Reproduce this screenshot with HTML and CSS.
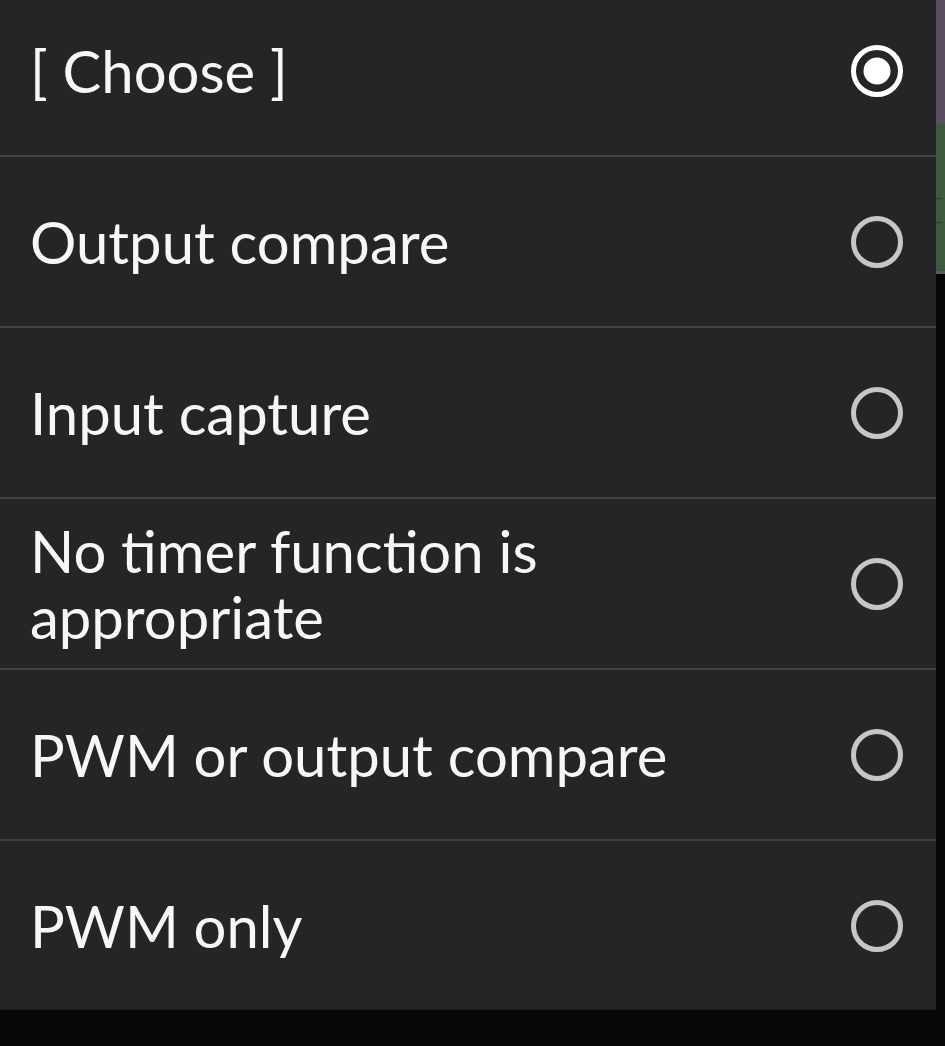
FILE: index.html
```html
<!DOCTYPE html>
<html>
<head>
<meta charset="utf-8">
<link rel="stylesheet" href="styles.css">
</head>
<body>
<div class="screen">
  <div class="panel">
    <ul class="list">
      <li class="item selected">
        <span class="label">[ Choose ]</span>
        <svg class="radio" viewBox="0 0 52 52" width="52" height="52"><circle cx="26" cy="26" r="23.5" fill="none" stroke="currentColor" stroke-width="5"/><circle cx="26" cy="26" r="13.5" fill="currentColor"/></svg>
      </li>
      <li class="item">
        <span class="label">Output compare</span>
        <svg class="radio" viewBox="0 0 52 52" width="52" height="52"><circle cx="26" cy="26" r="23.5" fill="none" stroke="currentColor" stroke-width="5"/></svg>
      </li>
      <li class="item">
        <span class="label">Input capture</span>
        <svg class="radio" viewBox="0 0 52 52" width="52" height="52"><circle cx="26" cy="26" r="23.5" fill="none" stroke="currentColor" stroke-width="5"/></svg>
      </li>
      <li class="item">
        <span class="label">No timer function is<br>appropriate</span>
        <svg class="radio" viewBox="0 0 52 52" width="52" height="52"><circle cx="26" cy="26" r="23.5" fill="none" stroke="currentColor" stroke-width="5"/></svg>
      </li>
      <li class="item">
        <span class="label">PWM or output compare</span>
        <svg class="radio" viewBox="0 0 52 52" width="52" height="52"><circle cx="26" cy="26" r="23.5" fill="none" stroke="currentColor" stroke-width="5"/></svg>
      </li>
      <li class="item last">
        <span class="label">PWM only</span>
        <svg class="radio" viewBox="0 0 52 52" width="52" height="52"><circle cx="26" cy="26" r="23.5" fill="none" stroke="currentColor" stroke-width="5"/></svg>
      </li>
    </ul>
  </div>
  <div class="strip">
    <div class="strip-purple"></div>
    <div class="strip-green"><i class="mark m1"></i><i class="mark m2"></i></div>
    <div class="strip-gray"></div>
  </div>
</div>
</body>
</html>
```
FILE: styles.css
```css
html, body {
  margin: 0;
  padding: 0;
  background: #060606;
  height: 100%;
  overflow: hidden;
}
.screen {
  display: flex;
  width: 945px;
  height: 1046px;
  align-items: flex-start;
}
.panel {
  width: 936px;
  height: 1010px;
  overflow: hidden;
  background: #242527;
  border-bottom: 1px solid #1b1c1d;
  box-sizing: border-box;
}
.list {
  list-style: none;
  margin: -14px 0 0 0;
  padding: 0;
}
.item {
  height: 169px;
  display: flex;
  align-items: center;
  justify-content: space-between;
  padding: 0 33px 0 30px;
  border-bottom: 2px solid #404143;
  font-family: Lato, "Open Sans", sans-serif;
  font-size: 58px;
  line-height: 66px;
  color: #f7f7f7;
}
.item.last {
  border-bottom: none;
}
.radio {
  flex: none;
  color: #c6c6c6;
}
.selected .radio {
  color: #ffffff;
}
.strip {
  width: 9px;
  display: flex;
  flex-direction: column;
}
.strip-purple {
  height: 123px;
  background: #5b4e63;
}
.strip-green {
  height: 148px;
  background: #3e5a3e;
  display: flex;
  flex-direction: column;
}
.mark {
  display: block;
  height: 1px;
  width: 6px;
  background: #2a3a2a;
}
.m1 { margin-top: 75px; }
.m2 { margin-top: 23px; }
.strip-gray {
  height: 3px;
  background: #5a5a5a;
}
```
